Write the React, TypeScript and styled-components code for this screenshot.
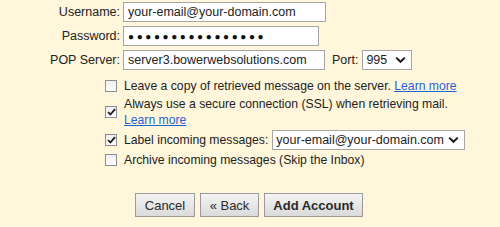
import React from "react";
import styled, { createGlobalStyle } from "styled-components";

const Global = createGlobalStyle`
  html, body { margin: 0; padding: 0; background: #fff6dc; }
  body { font-family: "Liberation Sans", Arial, sans-serif; font-size: 12px; color: #222; }
`;

const Page = styled.div`
  width: 500px;
  height: 227px;
  overflow: hidden;
  padding-top: 2px;
  box-sizing: border-box;
`;

const FieldGrid = styled.div`
  display: grid;
  grid-template-columns: 120px auto;
  column-gap: 3px;
  row-gap: 4px;
  align-items: center;
`;

const Label = styled.div`
  text-align: right;
  font-size: 12.5px;
`;

const Line = styled.div`
  display: flex;
  align-items: center;
`;

const PortLabel = styled(Label)`
  margin: 0 4px 0 7px;
`;

const Field = styled.div<{ w: number }>`
  width: ${(p) => p.w}px;
  height: 20px;
  box-sizing: border-box;
  border: 1px solid #a6a6a6;
  background: #fff;
  padding: 0 4px;
  display: flex;
  align-items: center;
  font-size: 12.5px;
  white-space: nowrap;
  overflow: hidden;
`;

const Dots = styled.span`
  font-size: 10px;
  letter-spacing: 2.6px;
  color: #111;
`;

const SelectBox = styled(Field)`
  justify-content: space-between;
  padding: 0 5px 0 3px;
  flex: none;
`;

const Options = styled.div`
  margin-top: 8px;
  padding-left: 105px;
  display: flex;
  flex-direction: column;
  gap: 2px;
`;

const OptRow = styled.div`
  display: flex;
  align-items: center;
  gap: 7px;
  font-size: 12.2px;
  line-height: 16px;
`;

const Box = styled.span`
  width: 12px;
  height: 12px;
  flex: none;
  box-sizing: border-box;
  border: 1px solid #8e8e8e;
  background: linear-gradient(#eeeeee, #ffffff);
  display: flex;
  align-items: center;
  justify-content: center;
`;

const Link = styled.a`
  color: #1f64d0;
  text-decoration: underline;
`;

const LabelText = styled.span`
  margin-right: -3px;
`;

const Buttons = styled.div`
  display: flex;
  gap: 5px;
  padding-left: 135px;
  margin-top: 25px;
`;

const Button = styled.button<{ w: number; bold?: boolean }>`
  width: ${(p) => p.w}px;
  height: 24px;
  padding: 0;
  font-family: "Liberation Sans", Arial, sans-serif;
  font-size: 13px;
  font-weight: ${(p) => (p.bold ? "bold" : "normal")};
  color: #2a2a2a;
  border: 1px solid #9a9a9a;
  background: linear-gradient(#f4f4f4, #dadada);
`;

const Chevron = () => (
  <svg width="11" height="8" viewBox="0 0 11 8">
    <path d="M1.2 1.6 L5.5 5.8 L9.8 1.6" fill="none" stroke="#1a1a1a" strokeWidth="2" />
  </svg>
);

const Check = ({ checked }: { checked?: boolean }) => (
  <Box>
    {checked && (
      <svg width="9" height="8" viewBox="0 0 9 8">
        <path d="M1 4 L3.4 6.5 L8 1.2" fill="none" stroke="#1a1a1a" strokeWidth="1.8" />
      </svg>
    )}
  </Box>
);

export default function App() {
  return (
    <Page>
      <Global />
      <FieldGrid>
        <Label>Username:</Label>
        <Field w={203}>your-email@your-domain.com</Field>
        <Label>Password:</Label>
        <Field w={196}>
          <Dots>{"●".repeat(16)}</Dots>
        </Field>
        <Label>POP Server:</Label>
        <Line>
          <Field w={202}>server3.bowerwebsolutions.com</Field>
          <PortLabel>Port:</PortLabel>
          <SelectBox w={50}>
            995
            <Chevron />
          </SelectBox>
        </Line>
      </FieldGrid>
      <Options>
        <OptRow>
          <Check />
          <span>
            Leave a copy of retrieved message on the server. <Link href="#">Learn more</Link>
          </span>
        </OptRow>
        <OptRow>
          <Check checked />
          <span>
            Always use a secure connection (SSL) when retrieving mail.
            <br />
            <Link href="#">Learn more</Link>
          </span>
        </OptRow>
        <OptRow>
          <Check checked />
          <LabelText>Label incoming messages:</LabelText>
          <SelectBox w={193}>
            your-email@your-domain.com
            <Chevron />
          </SelectBox>
        </OptRow>
        <OptRow>
          <Check />
          <span>Archive incoming messages (Skip the Inbox)</span>
        </OptRow>
      </Options>
      <Buttons>
        <Button w={60}>Cancel</Button>
        <Button w={59}>« Back</Button>
        <Button w={99} bold>Add Account</Button>
      </Buttons>
    </Page>
  );
}
